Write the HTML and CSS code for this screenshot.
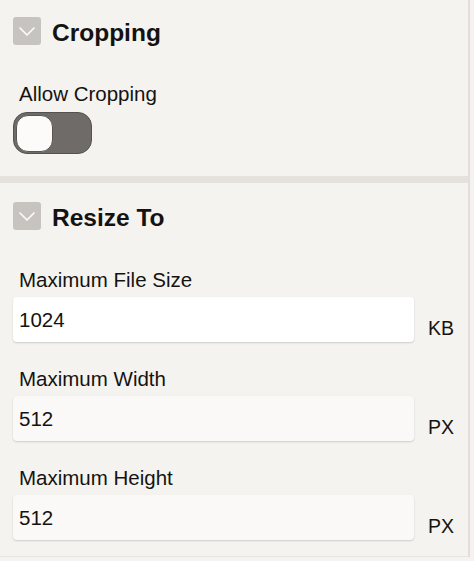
FILE: index.html
```html
<!DOCTYPE html>
<html lang="en">
<head>
<meta charset="utf-8">
<title>Image Settings</title>
<link rel="stylesheet" href="styles.css">
</head>
<body>
<div class="panel">
  <section class="sec sec-crop">
    <div class="sec-head">
      <span class="chev"><svg width="16" height="9" viewBox="0 0 16 9"><path d="M1 1 L8 8 L15 1" fill="none" stroke="#fbfaf8" stroke-width="1.7" stroke-linecap="round" stroke-linejoin="round"/></svg></span>
      <h2 class="sec-title">Cropping</h2>
    </div>
    <div class="field">
      <div class="label">Allow Cropping</div>
      <div class="toggle"><span class="knob"></span></div>
    </div>
  </section>
  <section class="sec sec-resize">
    <div class="sec-head">
      <span class="chev"><svg width="16" height="9" viewBox="0 0 16 9"><path d="M1 1 L8 8 L15 1" fill="none" stroke="#fbfaf8" stroke-width="1.7" stroke-linecap="round" stroke-linejoin="round"/></svg></span>
      <h2 class="sec-title">Resize To</h2>
    </div>
    <div class="field">
      <div class="label">Maximum File Size</div>
      <div class="input-row">
        <div class="input input-active">1024</div>
        <span class="unit">KB</span>
      </div>
    </div>
    <div class="field">
      <div class="label">Maximum Width</div>
      <div class="input-row">
        <div class="input">512</div>
        <span class="unit">PX</span>
      </div>
    </div>
    <div class="field">
      <div class="label">Maximum Height</div>
      <div class="input-row">
        <div class="input">512</div>
        <span class="unit">PX</span>
      </div>
    </div>
  </section>
</div>
</body>
</html>
```

FILE: styles.css
```css
html, body {
  margin: 0;
  padding: 0;
}
body {
  background: #f5f2ef;
  font-family: "Liberation Sans", Arial, sans-serif;
  color: #141311;
}
.panel {
  width: 468px;
  border-right: 2px solid #e2dedb;
  background: #f5f3f0;
}
.sec {
  padding: 17px 0 22px 0;
}
.sec-resize {
  border-top: 7px solid #e5e1dd;
  padding: 19px 0 16px 0;
  border-bottom: 1px solid #e8e4e0;
}
.sec-head {
  display: flex;
  align-items: center;
  height: 28px;
  padding-left: 13px;
  gap: 11px;
}
.chev {
  width: 28px;
  height: 28px;
  border-radius: 3px;
  background: #c7c3bf;
  display: flex;
  align-items: center;
  justify-content: center;
}
.sec-title {
  margin: 0;
  padding-top: 3px;
  font-size: 24.5px;
  font-weight: 700;
  line-height: 28px;
}
.field {
  display: flex;
  flex-direction: column;
  align-items: flex-start;
}
.sec-head + .field {
  margin-top: 37px;
}
.sec-resize .sec-head + .field {
  margin-top: 38px;
}
.field + .field {
  margin-top: 25px;
}
.label {
  font-size: 20.5px;
  line-height: 24px;
  padding-left: 19px;
}
.toggle {
  box-sizing: border-box;
  margin: 6px 0 0 13px;
  width: 79px;
  height: 42px;
  border-radius: 14px;
  background: #6f6b69;
  border: 1px solid #55514f;
  display: flex;
  align-items: center;
  padding-left: 2px;
}
.knob {
  box-sizing: border-box;
  width: 37px;
  height: 37px;
  border-radius: 12px;
  background: #fcfbfa;
  border: 1px solid #5a5654;
}
.input-row {
  margin-top: 5px;
  padding-left: 13px;
  display: flex;
  align-items: flex-end;
  gap: 14px;
}
.input {
  width: 401px;
  height: 45px;
  box-sizing: border-box;
  border-radius: 4px;
  background: #fbf9f7;
  box-shadow: 0 1px 2px rgba(0, 0, 0, 0.16);
  font-size: 20.5px;
  line-height: 45px;
  padding: 0 6px;
}
.input-active {
  background: #ffffff;
}
.unit {
  font-size: 19.5px;
  line-height: 19px;
  margin-bottom: 4px;
}
```
